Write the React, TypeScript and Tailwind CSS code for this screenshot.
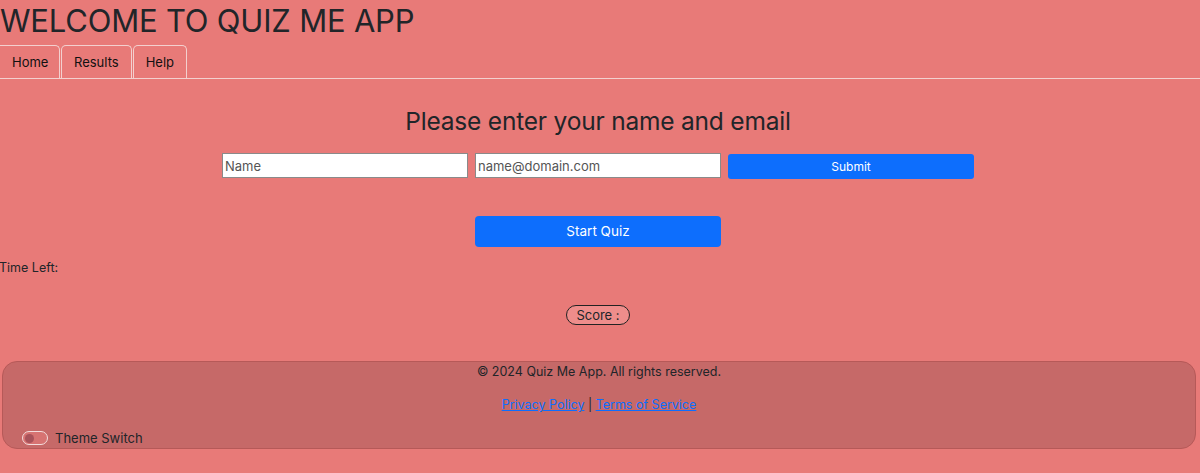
import React, { useState } from 'react';

export default function App() {
  const [tab, setTab] = useState('Home');
  const [dark, setDark] = useState(false);
  const tabs = ['Home', 'Results', 'Help'];

  return (
    <div className="min-h-[473px] bg-[#e87a78] text-[#212529] font-['Inter','Liberation_Sans',sans-serif]">
      <h1 className="text-[31px] leading-[38px] pt-[2px] tracking-[-0.2px]">WELCOME TO QUIZ ME APP</h1>

      <div className="flex mt-[5px] border-b border-[#f3d0cf]">
        {tabs.map((t) => (
          <button
            key={t}
            onClick={() => setTab(t)}
            className="h-[34px] px-[12px] mr-[1px] -mb-px text-[13px] text-[#111] border border-b-0 border-[#f3d0cf] rounded-t-[5px] first:border-l-0 first:rounded-tl-none first:w-[60px]"
          >
            {t}
          </button>
        ))}
      </div>

      <div className="flex flex-col items-center pr-[4px]">
        <h2 className="text-[24.5px] leading-[28px] mt-[28px] tracking-[-0.2px]">Please enter your name and email</h2>

        <div className="flex gap-[7px] mt-[17px] items-center">
          <input
            placeholder="Name"
            className="w-[246px] h-[25px] bg-white border border-[#8a8a8a] px-[2px] text-[13px] placeholder:text-[#555]"
          />
          <input
            placeholder="name@domain.com"
            className="w-[246px] h-[25px] bg-white border border-[#8a8a8a] px-[2px] text-[13px] placeholder:text-[#555]"
          />
          <button className="w-[246px] h-[25px] mt-[2px] bg-[#0d6efd] text-white text-[12px] rounded-[3px]">Submit</button>
        </div>

        <button className="w-[246px] h-[31px] mt-[37px] bg-[#0d6efd] text-white text-[13.5px] rounded-[4px]">Start Quiz</button>
      </div>

      <div className="text-[12.5px] leading-[16px] mt-[13px] -ml-[1px]">Time Left:</div>

      <div className="flex justify-center mt-[29px] pr-[4px]">
        <span className="h-[20px] px-[9px] border border-[#222] rounded-full bg-[#ee8d8b] text-[13px] leading-[18px]">Score :</span>
      </div>

      <footer className="ml-[2px] mr-[4px] mt-[36px] h-[88px] rounded-[15px] bg-[#c66968] border border-[#b65958] text-[12.5px] relative">
        <p className="text-center leading-[18px] pt-[1px]">© 2024 Quiz Me App. All rights reserved.</p>
        <p className="text-center leading-[18px] mt-[15px]">
          <a href="#" className="text-[#0d6efd] underline">Privacy Policy</a>
          {' | '}
          <a href="#" className="text-[#0d6efd] underline">Terms of Service</a>
        </p>
        <label className="flex items-center gap-[7px] ml-[19px] mt-[16px]">
          <button
            onClick={() => setDark(!dark)}
            className="w-[26px] h-[14px] rounded-full border border-[#f3dcdc] bg-[#d77372] flex items-center px-[2px]"
          >
            <span className="w-[9px] h-[9px] rounded-full bg-[#a8525a]" />
          </button>
          <span className="leading-[16px] text-[13px]">Theme Switch</span>
        </label>
      </footer>
    </div>
  );
}
